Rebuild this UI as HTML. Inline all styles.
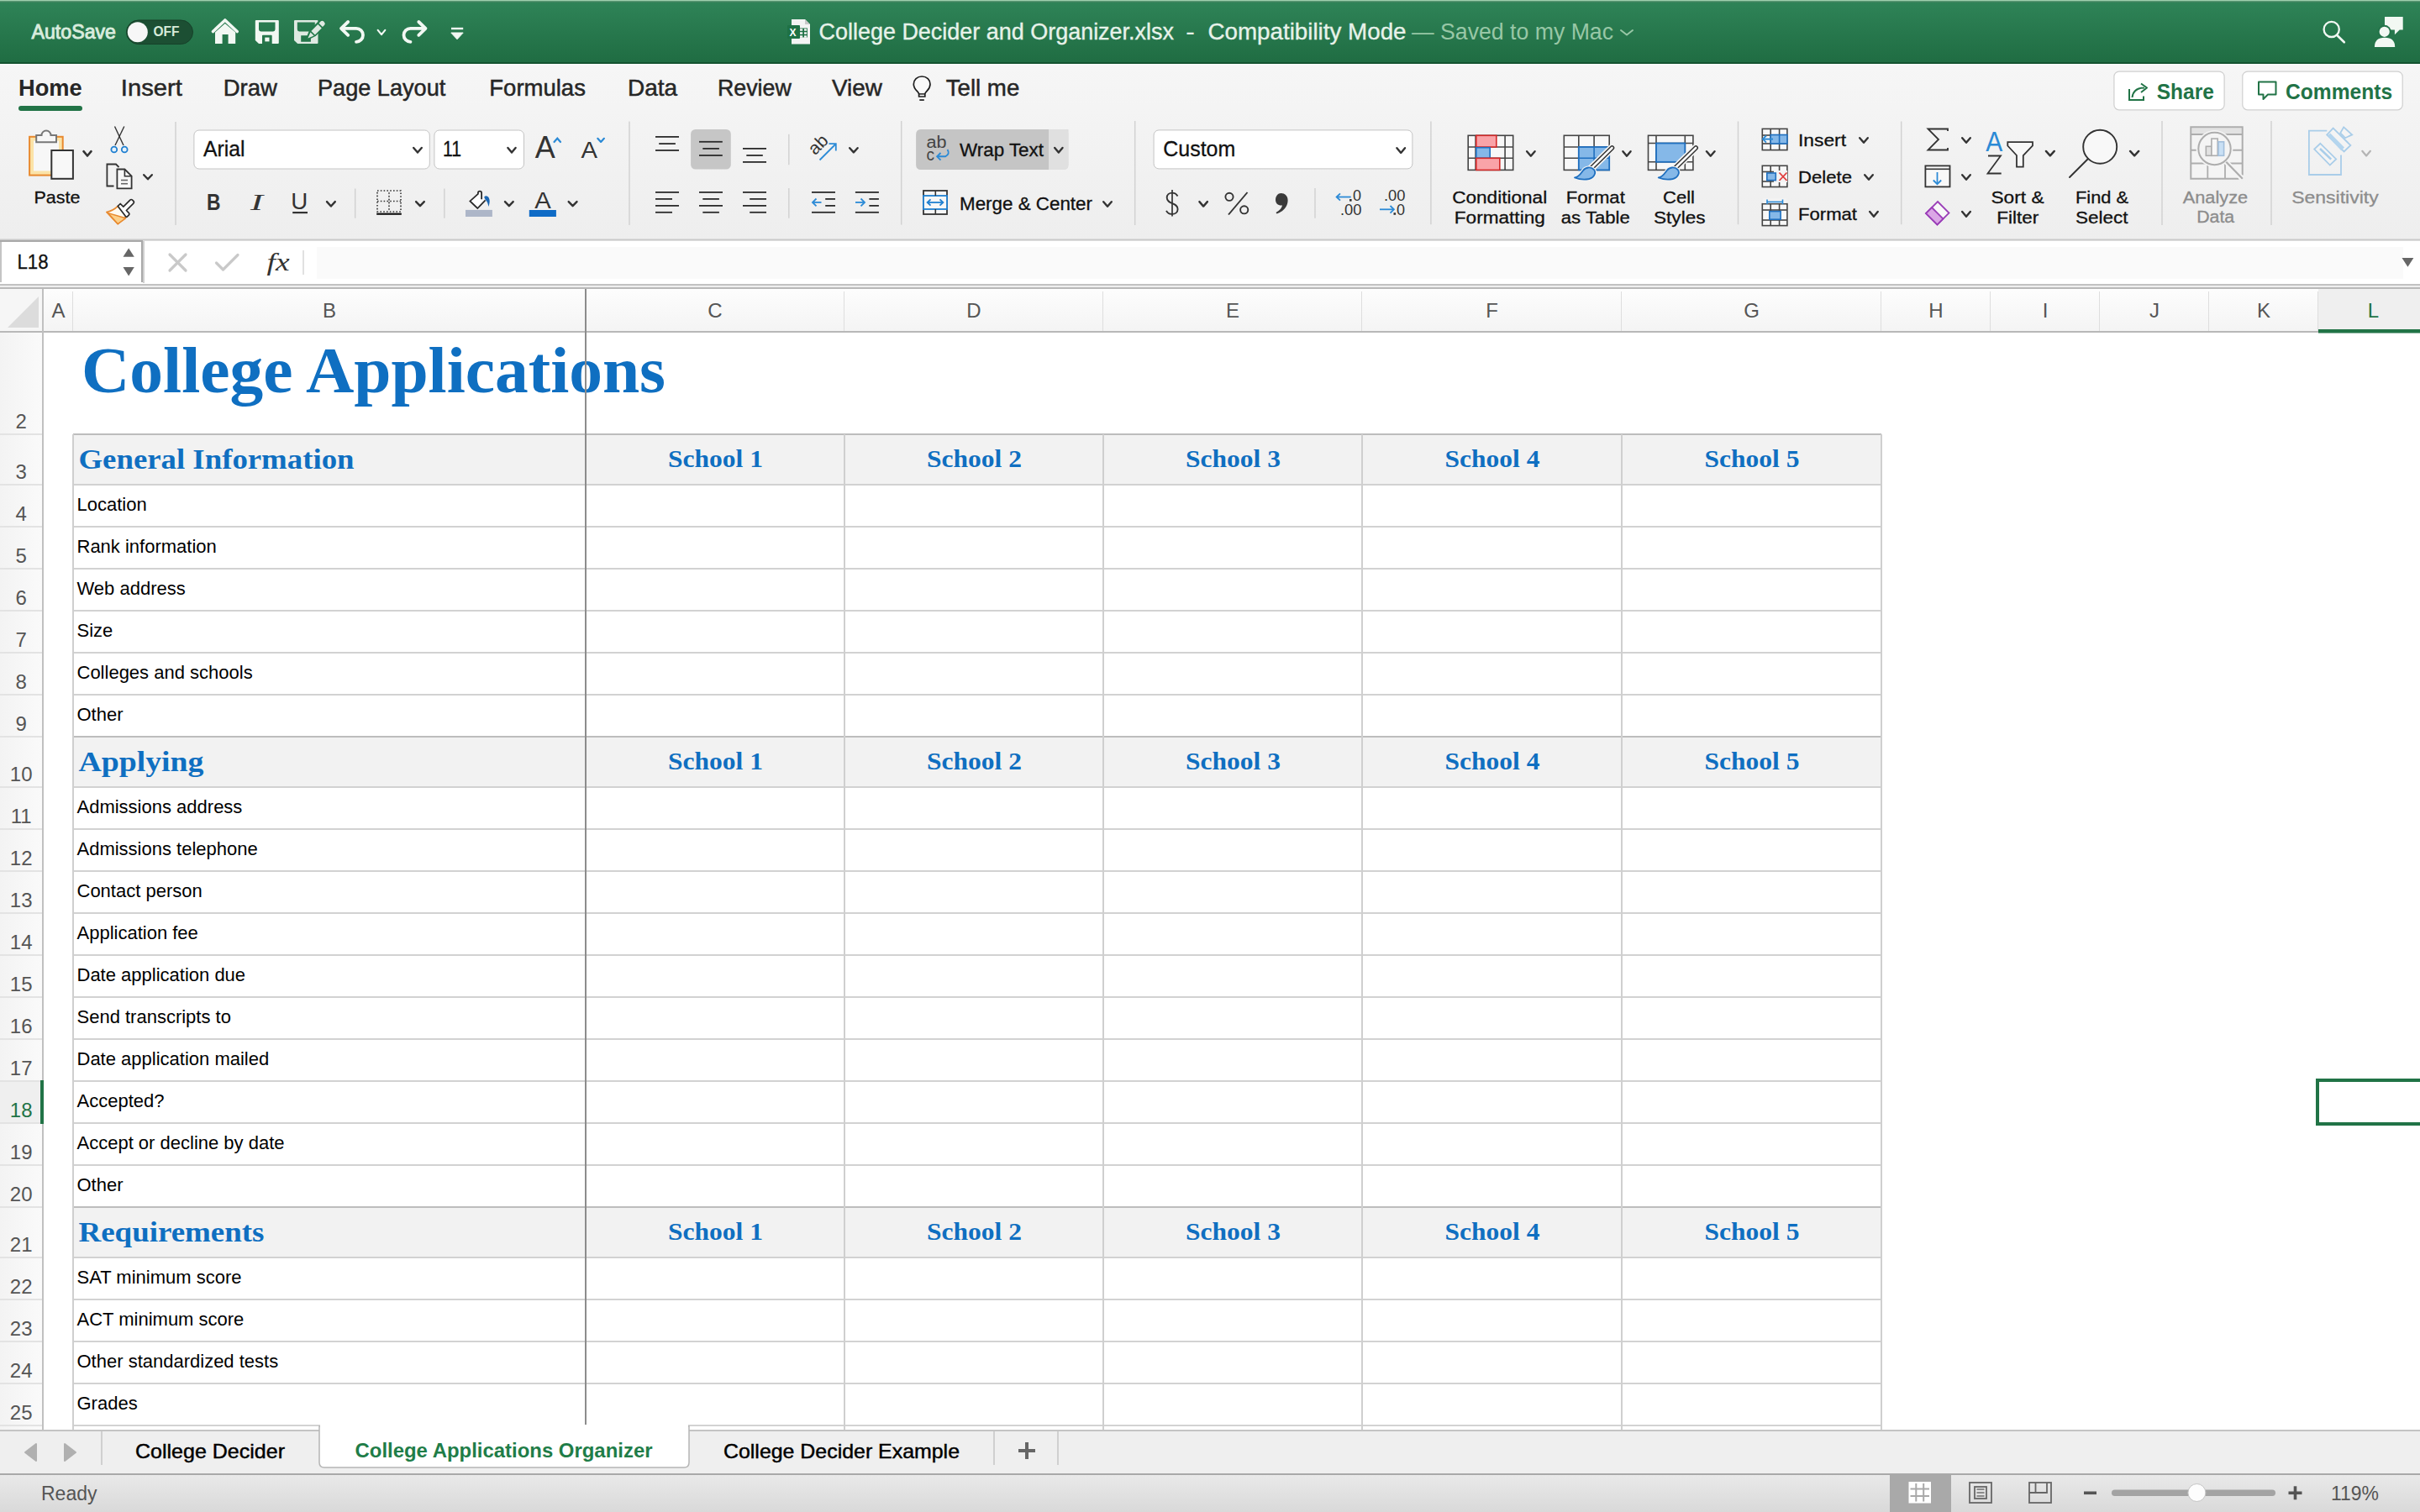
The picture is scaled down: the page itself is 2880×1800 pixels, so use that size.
<!DOCTYPE html>
<html><head><meta charset="utf-8"><title>Excel</title>
<style>html,body{margin:0;padding:0;width:2880px;height:1800px;overflow:hidden;background:#f3f3f3}svg{display:block}</style>
</head><body><svg width="2880" height="1800" viewBox="0 0 2880 1800">
<defs>
<linearGradient id="gTitle" x1="0" y1="0" x2="0" y2="1">
 <stop offset="0" stop-color="#2f8458"/><stop offset="1" stop-color="#1f6c42"/>
</linearGradient>
<linearGradient id="gRib" x1="0" y1="0" x2="0" y2="1">
 <stop offset="0" stop-color="#f6f6f6"/><stop offset="1" stop-color="#eeeeee"/>
</linearGradient>
<linearGradient id="gColHdr" x1="0" y1="0" x2="0" y2="1">
 <stop offset="0" stop-color="#fdfdfd"/><stop offset="1" stop-color="#f4f4f4"/>
</linearGradient>
<linearGradient id="gRowHdr" x1="0" y1="0" x2="1" y2="0">
 <stop offset="0" stop-color="#f3f3f3"/><stop offset="1" stop-color="#fafafa"/>
</linearGradient>
<linearGradient id="gStatus" x1="0" y1="0" x2="0" y2="1">
 <stop offset="0" stop-color="#e9e9e9"/><stop offset="1" stop-color="#d9d9d9"/>
</linearGradient>
<linearGradient id="gTabs" x1="0" y1="0" x2="0" y2="1">
 <stop offset="0" stop-color="#ececec"/><stop offset="1" stop-color="#f2f2f2"/>
</linearGradient>
</defs>
<rect x="0" y="0" width="2880" height="1800" fill="#f3f3f3" />
<rect x="0" y="0" width="2880" height="76" fill="url(#gTitle)" />
<rect x="0" y="0" width="2880" height="1.5" fill="#9fcfae" />
<rect x="0" y="1.5" width="2880" height="1" fill="#4f8566" />
<rect x="0" y="74" width="2880" height="2" fill="#145330" />
<rect x="0" y="76" width="2880" height="210" fill="url(#gRib)" />
<rect x="0" y="76" width="2880" height="1.5" fill="#fbfbfb" />
<rect x="0" y="284.5" width="2880" height="2" fill="#c9c9c9" />
<rect x="0" y="287" width="2880" height="52" fill="#ffffff" />
<rect x="377" y="294" width="2483" height="38" fill="#fafafa" />
<rect x="0" y="287" width="170" height="49" fill="#ffffff" />
<rect x="0" y="287" width="2" height="49" fill="#c4c4c4" />
<rect x="0" y="286" width="170" height="2" fill="#a9a9a9" />
<rect x="168" y="286" width="2" height="50" fill="#a9a9a9" />
<rect x="170" y="287" width="2" height="50" fill="#d0d0d0" />
<rect x="0" y="338" width="2880" height="2" fill="#c2c2c2" />
<rect x="0" y="340" width="2880" height="3" fill="#eeeeee" />
<rect x="0" y="342" width="2880" height="2" fill="#b9b9b9" />
<rect x="0" y="344" width="2880" height="1359" fill="#ffffff" />
<rect x="52" y="344" width="2828" height="50" fill="url(#gColHdr)" />
<rect x="0" y="344" width="50" height="50" fill="#f6f6f6" />
<polygon points="9,390 46,390 46,353" fill="#dcdcdc"/>
<rect x="0" y="394" width="2880" height="2" fill="#b8b8b8" />
<rect x="2759" y="344" width="121" height="50" fill="#efefef" />
<rect x="2759" y="392" width="121" height="4.5" fill="#217346" />
<text x="69.5" y="377.5" font-family="Liberation Sans" font-size="24" fill="#555555" text-anchor="middle" >A</text>
<rect x="86" y="347" width="1" height="47" fill="#dedede" />
<text x="392.0" y="377.5" font-family="Liberation Sans" font-size="24" fill="#555555" text-anchor="middle" >B</text>
<rect x="696" y="347" width="1" height="47" fill="#dedede" />
<text x="851.0" y="377.5" font-family="Liberation Sans" font-size="24" fill="#555555" text-anchor="middle" >C</text>
<rect x="1004" y="347" width="1" height="47" fill="#dedede" />
<text x="1159.0" y="377.5" font-family="Liberation Sans" font-size="24" fill="#555555" text-anchor="middle" >D</text>
<rect x="1312" y="347" width="1" height="47" fill="#dedede" />
<text x="1467.0" y="377.5" font-family="Liberation Sans" font-size="24" fill="#555555" text-anchor="middle" >E</text>
<rect x="1620" y="347" width="1" height="47" fill="#dedede" />
<text x="1775.5" y="377.5" font-family="Liberation Sans" font-size="24" fill="#555555" text-anchor="middle" >F</text>
<rect x="1929" y="347" width="1" height="47" fill="#dedede" />
<text x="2084.5" y="377.5" font-family="Liberation Sans" font-size="24" fill="#555555" text-anchor="middle" >G</text>
<rect x="2238" y="347" width="1" height="47" fill="#dedede" />
<text x="2304.0" y="377.5" font-family="Liberation Sans" font-size="24" fill="#555555" text-anchor="middle" >H</text>
<rect x="2368" y="347" width="1" height="47" fill="#dedede" />
<text x="2434.0" y="377.5" font-family="Liberation Sans" font-size="24" fill="#555555" text-anchor="middle" >I</text>
<rect x="2498" y="347" width="1" height="47" fill="#dedede" />
<text x="2564.0" y="377.5" font-family="Liberation Sans" font-size="24" fill="#555555" text-anchor="middle" >J</text>
<rect x="2628" y="347" width="1" height="47" fill="#dedede" />
<text x="2694.0" y="377.5" font-family="Liberation Sans" font-size="24" fill="#555555" text-anchor="middle" >K</text>
<rect x="2758" y="347" width="1" height="47" fill="#dedede" />
<text x="2824.5" y="377.5" font-family="Liberation Sans" font-size="24" fill="#217346" text-anchor="middle" >L</text>
<rect x="0" y="396" width="50" height="1307" fill="url(#gRowHdr)" />
<rect x="50" y="344" width="2" height="1359" fill="#c0c0c0" />
<rect x="0" y="516" width="50" height="2" fill="#e3e3e3" />
<text x="25.2" y="510" font-family="Liberation Sans" font-size="24" fill="#555555" text-anchor="middle" >2</text>
<rect x="0" y="576" width="50" height="2" fill="#e3e3e3" />
<text x="25.2" y="570" font-family="Liberation Sans" font-size="24" fill="#555555" text-anchor="middle" >3</text>
<rect x="0" y="626" width="50" height="2" fill="#e3e3e3" />
<text x="25.2" y="620" font-family="Liberation Sans" font-size="24" fill="#555555" text-anchor="middle" >4</text>
<rect x="0" y="676" width="50" height="2" fill="#e3e3e3" />
<text x="25.2" y="670" font-family="Liberation Sans" font-size="24" fill="#555555" text-anchor="middle" >5</text>
<rect x="0" y="726" width="50" height="2" fill="#e3e3e3" />
<text x="25.2" y="720" font-family="Liberation Sans" font-size="24" fill="#555555" text-anchor="middle" >6</text>
<rect x="0" y="776" width="50" height="2" fill="#e3e3e3" />
<text x="25.2" y="770" font-family="Liberation Sans" font-size="24" fill="#555555" text-anchor="middle" >7</text>
<rect x="0" y="826" width="50" height="2" fill="#e3e3e3" />
<text x="25.2" y="820" font-family="Liberation Sans" font-size="24" fill="#555555" text-anchor="middle" >8</text>
<rect x="0" y="876" width="50" height="2" fill="#e3e3e3" />
<text x="25.2" y="870" font-family="Liberation Sans" font-size="24" fill="#555555" text-anchor="middle" >9</text>
<rect x="0" y="936" width="50" height="2" fill="#e3e3e3" />
<text x="25.2" y="930" font-family="Liberation Sans" font-size="24" fill="#555555" text-anchor="middle" >10</text>
<rect x="0" y="986" width="50" height="2" fill="#e3e3e3" />
<text x="25.2" y="980" font-family="Liberation Sans" font-size="24" fill="#555555" text-anchor="middle" >11</text>
<rect x="0" y="1036" width="50" height="2" fill="#e3e3e3" />
<text x="25.2" y="1030" font-family="Liberation Sans" font-size="24" fill="#555555" text-anchor="middle" >12</text>
<rect x="0" y="1086" width="50" height="2" fill="#e3e3e3" />
<text x="25.2" y="1080" font-family="Liberation Sans" font-size="24" fill="#555555" text-anchor="middle" >13</text>
<rect x="0" y="1136" width="50" height="2" fill="#e3e3e3" />
<text x="25.2" y="1130" font-family="Liberation Sans" font-size="24" fill="#555555" text-anchor="middle" >14</text>
<rect x="0" y="1186" width="50" height="2" fill="#e3e3e3" />
<text x="25.2" y="1180" font-family="Liberation Sans" font-size="24" fill="#555555" text-anchor="middle" >15</text>
<rect x="0" y="1236" width="50" height="2" fill="#e3e3e3" />
<text x="25.2" y="1230" font-family="Liberation Sans" font-size="24" fill="#555555" text-anchor="middle" >16</text>
<rect x="0" y="1286" width="50" height="2" fill="#e3e3e3" />
<text x="25.2" y="1280" font-family="Liberation Sans" font-size="24" fill="#555555" text-anchor="middle" >17</text>
<rect x="0" y="1336" width="50" height="2" fill="#e3e3e3" />
<rect x="0" y="1288" width="48" height="48" fill="#efefef" />
<rect x="48" y="1286" width="4" height="52" fill="#217346" />
<text x="25.2" y="1330" font-family="Liberation Sans" font-size="24" fill="#217346" text-anchor="middle" >18</text>
<rect x="0" y="1386" width="50" height="2" fill="#e3e3e3" />
<text x="25.2" y="1380" font-family="Liberation Sans" font-size="24" fill="#555555" text-anchor="middle" >19</text>
<rect x="0" y="1436" width="50" height="2" fill="#e3e3e3" />
<text x="25.2" y="1430" font-family="Liberation Sans" font-size="24" fill="#555555" text-anchor="middle" >20</text>
<rect x="0" y="1496" width="50" height="2" fill="#e3e3e3" />
<text x="25.2" y="1490" font-family="Liberation Sans" font-size="24" fill="#555555" text-anchor="middle" >21</text>
<rect x="0" y="1546" width="50" height="2" fill="#e3e3e3" />
<text x="25.2" y="1540" font-family="Liberation Sans" font-size="24" fill="#555555" text-anchor="middle" >22</text>
<rect x="0" y="1596" width="50" height="2" fill="#e3e3e3" />
<text x="25.2" y="1590" font-family="Liberation Sans" font-size="24" fill="#555555" text-anchor="middle" >23</text>
<rect x="0" y="1646" width="50" height="2" fill="#e3e3e3" />
<text x="25.2" y="1640" font-family="Liberation Sans" font-size="24" fill="#555555" text-anchor="middle" >24</text>
<rect x="0" y="1696" width="50" height="2" fill="#e3e3e3" />
<text x="25.2" y="1690" font-family="Liberation Sans" font-size="24" fill="#555555" text-anchor="middle" >25</text>
<rect x="87" y="517" width="2152" height="60" fill="#f2f2f2" />
<rect x="87" y="877" width="2152" height="60" fill="#f2f2f2" />
<rect x="87" y="1437" width="2152" height="60" fill="#f2f2f2" />
<rect x="87" y="516" width="2152" height="2" fill="#bdbdbd" />
<rect x="87" y="576" width="2152" height="2" fill="#d2d2d2" />
<rect x="87" y="626" width="2152" height="2" fill="#d2d2d2" />
<rect x="87" y="676" width="2152" height="2" fill="#d2d2d2" />
<rect x="87" y="726" width="2152" height="2" fill="#d2d2d2" />
<rect x="87" y="776" width="2152" height="2" fill="#d2d2d2" />
<rect x="87" y="826" width="2152" height="2" fill="#d2d2d2" />
<rect x="87" y="876" width="2152" height="2" fill="#bdbdbd" />
<rect x="87" y="936" width="2152" height="2" fill="#d2d2d2" />
<rect x="87" y="986" width="2152" height="2" fill="#d2d2d2" />
<rect x="87" y="1036" width="2152" height="2" fill="#d2d2d2" />
<rect x="87" y="1086" width="2152" height="2" fill="#d2d2d2" />
<rect x="87" y="1136" width="2152" height="2" fill="#d2d2d2" />
<rect x="87" y="1186" width="2152" height="2" fill="#d2d2d2" />
<rect x="87" y="1236" width="2152" height="2" fill="#d2d2d2" />
<rect x="87" y="1286" width="2152" height="2" fill="#d2d2d2" />
<rect x="87" y="1336" width="2152" height="2" fill="#d2d2d2" />
<rect x="87" y="1386" width="2152" height="2" fill="#d2d2d2" />
<rect x="87" y="1436" width="2152" height="2" fill="#bdbdbd" />
<rect x="87" y="1496" width="2152" height="2" fill="#d2d2d2" />
<rect x="87" y="1546" width="2152" height="2" fill="#d2d2d2" />
<rect x="87" y="1596" width="2152" height="2" fill="#d2d2d2" />
<rect x="87" y="1646" width="2152" height="2" fill="#d2d2d2" />
<rect x="87" y="1696" width="2152" height="2" fill="#d2d2d2" />
<rect x="86" y="517" width="2" height="1186" fill="#cfcfcf" />
<rect x="696" y="517" width="2" height="1186" fill="#cfcfcf" />
<rect x="1004" y="517" width="2" height="1186" fill="#cfcfcf" />
<rect x="1312" y="517" width="2" height="1186" fill="#cfcfcf" />
<rect x="1620" y="517" width="2" height="1186" fill="#cfcfcf" />
<rect x="1929" y="517" width="2" height="1186" fill="#cfcfcf" />
<rect x="2238" y="517" width="2" height="1186" fill="#cfcfcf" />
<text x="93.5" y="558" font-family="Liberation Serif" font-size="34" fill="#0f6fc1" font-weight="bold" textLength="328" lengthAdjust="spacingAndGlyphs" >General Information</text>
<text x="851.5" y="556" font-family="Liberation Serif" font-size="29.5" fill="#0f6fc1" font-weight="bold" text-anchor="middle" textLength="113" lengthAdjust="spacingAndGlyphs" >School 1</text>
<text x="1159.5" y="556" font-family="Liberation Serif" font-size="29.5" fill="#0f6fc1" font-weight="bold" text-anchor="middle" textLength="113" lengthAdjust="spacingAndGlyphs" >School 2</text>
<text x="1467.5" y="556" font-family="Liberation Serif" font-size="29.5" fill="#0f6fc1" font-weight="bold" text-anchor="middle" textLength="113" lengthAdjust="spacingAndGlyphs" >School 3</text>
<text x="1776.0" y="556" font-family="Liberation Serif" font-size="29.5" fill="#0f6fc1" font-weight="bold" text-anchor="middle" textLength="113" lengthAdjust="spacingAndGlyphs" >School 4</text>
<text x="2085.0" y="556" font-family="Liberation Serif" font-size="29.5" fill="#0f6fc1" font-weight="bold" text-anchor="middle" textLength="113" lengthAdjust="spacingAndGlyphs" >School 5</text>
<text x="91.5" y="608" font-family="Liberation Sans" font-size="22" fill="#000000" >Location</text>
<text x="91.5" y="658" font-family="Liberation Sans" font-size="22" fill="#000000" >Rank information</text>
<text x="91.5" y="708" font-family="Liberation Sans" font-size="22" fill="#000000" >Web address</text>
<text x="91.5" y="758" font-family="Liberation Sans" font-size="22" fill="#000000" >Size</text>
<text x="91.5" y="808" font-family="Liberation Sans" font-size="22" fill="#000000" >Colleges and schools</text>
<text x="91.5" y="858" font-family="Liberation Sans" font-size="22" fill="#000000" >Other</text>
<text x="93.5" y="918" font-family="Liberation Serif" font-size="34" fill="#0f6fc1" font-weight="bold" textLength="149" lengthAdjust="spacingAndGlyphs" >Applying</text>
<text x="851.5" y="916" font-family="Liberation Serif" font-size="29.5" fill="#0f6fc1" font-weight="bold" text-anchor="middle" textLength="113" lengthAdjust="spacingAndGlyphs" >School 1</text>
<text x="1159.5" y="916" font-family="Liberation Serif" font-size="29.5" fill="#0f6fc1" font-weight="bold" text-anchor="middle" textLength="113" lengthAdjust="spacingAndGlyphs" >School 2</text>
<text x="1467.5" y="916" font-family="Liberation Serif" font-size="29.5" fill="#0f6fc1" font-weight="bold" text-anchor="middle" textLength="113" lengthAdjust="spacingAndGlyphs" >School 3</text>
<text x="1776.0" y="916" font-family="Liberation Serif" font-size="29.5" fill="#0f6fc1" font-weight="bold" text-anchor="middle" textLength="113" lengthAdjust="spacingAndGlyphs" >School 4</text>
<text x="2085.0" y="916" font-family="Liberation Serif" font-size="29.5" fill="#0f6fc1" font-weight="bold" text-anchor="middle" textLength="113" lengthAdjust="spacingAndGlyphs" >School 5</text>
<text x="91.5" y="968" font-family="Liberation Sans" font-size="22" fill="#000000" >Admissions address</text>
<text x="91.5" y="1018" font-family="Liberation Sans" font-size="22" fill="#000000" >Admissions telephone</text>
<text x="91.5" y="1068" font-family="Liberation Sans" font-size="22" fill="#000000" >Contact person</text>
<text x="91.5" y="1118" font-family="Liberation Sans" font-size="22" fill="#000000" >Application fee</text>
<text x="91.5" y="1168" font-family="Liberation Sans" font-size="22" fill="#000000" >Date application due</text>
<text x="91.5" y="1218" font-family="Liberation Sans" font-size="22" fill="#000000" >Send transcripts to</text>
<text x="91.5" y="1268" font-family="Liberation Sans" font-size="22" fill="#000000" >Date application mailed</text>
<text x="91.5" y="1318" font-family="Liberation Sans" font-size="22" fill="#000000" >Accepted?</text>
<text x="91.5" y="1368" font-family="Liberation Sans" font-size="22" fill="#000000" >Accept or decline by date</text>
<text x="91.5" y="1418" font-family="Liberation Sans" font-size="22" fill="#000000" >Other</text>
<text x="93.5" y="1478" font-family="Liberation Serif" font-size="34" fill="#0f6fc1" font-weight="bold" textLength="221" lengthAdjust="spacingAndGlyphs" >Requirements</text>
<text x="851.5" y="1476" font-family="Liberation Serif" font-size="29.5" fill="#0f6fc1" font-weight="bold" text-anchor="middle" textLength="113" lengthAdjust="spacingAndGlyphs" >School 1</text>
<text x="1159.5" y="1476" font-family="Liberation Serif" font-size="29.5" fill="#0f6fc1" font-weight="bold" text-anchor="middle" textLength="113" lengthAdjust="spacingAndGlyphs" >School 2</text>
<text x="1467.5" y="1476" font-family="Liberation Serif" font-size="29.5" fill="#0f6fc1" font-weight="bold" text-anchor="middle" textLength="113" lengthAdjust="spacingAndGlyphs" >School 3</text>
<text x="1776.0" y="1476" font-family="Liberation Serif" font-size="29.5" fill="#0f6fc1" font-weight="bold" text-anchor="middle" textLength="113" lengthAdjust="spacingAndGlyphs" >School 4</text>
<text x="2085.0" y="1476" font-family="Liberation Serif" font-size="29.5" fill="#0f6fc1" font-weight="bold" text-anchor="middle" textLength="113" lengthAdjust="spacingAndGlyphs" >School 5</text>
<text x="91.5" y="1528" font-family="Liberation Sans" font-size="22" fill="#000000" >SAT minimum score</text>
<text x="91.5" y="1578" font-family="Liberation Sans" font-size="22" fill="#000000" >ACT minimum score</text>
<text x="91.5" y="1628" font-family="Liberation Sans" font-size="22" fill="#000000" >Other standardized tests</text>
<text x="91.5" y="1678" font-family="Liberation Sans" font-size="22" fill="#000000" >Grades</text>
<text x="97" y="466.5" font-family="Liberation Serif" font-size="78" fill="#0f6fc1" font-weight="bold" textLength="695" lengthAdjust="spacingAndGlyphs" >College Applications</text>
<rect x="696" y="344" width="2" height="1359" fill="#8c8c8c" />
<rect x="2758" y="1286" width="130" height="52" fill="none" stroke="#217346" stroke-width="4"/>
<rect x="0" y="1703" width="2880" height="52" fill="#efefef" />
<rect x="0" y="1702" width="2880" height="2" fill="#c4c4c4" />
<rect x="0" y="1754" width="2880" height="2" fill="#a9a9a9" />
<polygon points="30,1729 43,1719 43,1739" fill="#b0b0b0" stroke="#b0b0b0" stroke-width="2" stroke-linejoin="round"/>
<polygon points="90,1729 77,1719 77,1739" fill="#b0b0b0" stroke="#b0b0b0" stroke-width="2" stroke-linejoin="round"/>
<rect x="120" y="1704" width="2" height="40" fill="#d0d0d0" />
<path d="M380,1698 L820,1698 L820,1741 Q820,1747 814,1747 L386,1747 Q380,1747 380,1741 Z" fill="#ffffff" stroke="#b5b5b5" stroke-width="1.5"/>
<rect x="381" y="1696" width="438" height="6" fill="#ffffff" />
<text x="161" y="1735.5" font-family="Liberation Sans" font-size="24" fill="#000" textLength="178" lengthAdjust="spacingAndGlyphs" stroke="#000" stroke-width="0.45">College Decider</text>
<text x="422.5" y="1735.2" font-family="Liberation Sans" font-size="24" fill="#1f7d48" font-weight="bold" textLength="354" lengthAdjust="spacingAndGlyphs" >College Applications Organizer</text>
<text x="861" y="1735.5" font-family="Liberation Sans" font-size="24" fill="#000" textLength="281" lengthAdjust="spacingAndGlyphs" stroke="#000" stroke-width="0.45">College Decider Example</text>
<rect x="1182" y="1704" width="2" height="40" fill="#d0d0d0" />
<rect x="1258" y="1704" width="2" height="40" fill="#d0d0d0" />
<rect x="1212" y="1725" width="20" height="4" fill="#666" />
<rect x="1220" y="1717" width="4" height="20" fill="#666" />
<rect x="0" y="1756" width="2880" height="44" fill="url(#gStatus)" />
<text x="49" y="1786" font-family="Liberation Sans" font-size="23" fill="#555555" >Ready</text>
<rect x="2249" y="1756" width="73" height="44" fill="#a9a9a9" />
<text x="37.5" y="46.4" font-family="Liberation Sans" font-size="23" fill="#d9ecdd" textLength="100.5" lengthAdjust="spacingAndGlyphs" stroke="#d9ecdd" stroke-width="0.9">AutoSave</text>
<rect x="150.5" y="24" width="79" height="28.5" rx="14.25" fill="#1c4f33" stroke="#164029" stroke-width="1"/>
<circle cx="163.8" cy="38.2" r="12" fill="#f7f7f7"/>
<text x="182.5" y="42.8" font-family="Liberation Sans" font-size="16" fill="#d6ebd9" font-weight="bold" textLength="31" lengthAdjust="spacingAndGlyphs" >OFF</text>
<polyline points="253.5,37.5 267.8,24 282.2,37.5" fill="none" stroke="#f2f8f3" stroke-width="3.6" stroke-linecap="round" stroke-linejoin="round"/>
<path d="M256,38.5 L267.8,28 L280.2,38.5 L280.2,52 L271.6,52 L271.6,41 L264.6,41 L264.6,52 L256,52 Z" fill="#f2f8f3"/>
<path d="M303.8,25 Q303.8,24 304.8,24 L330.8,24 Q331.8,24 331.8,25 L331.8,51 Q331.8,52 330.8,52 L308,52 L303.8,48 Z M308,26.5 L308,35 Q308,37.4 310.4,37.4 L325.1,37.4 Q327.5,37.4 327.5,35 L327.5,26.5 Z M312,52 L312,42.5 Q312,41.7 312.8,41.7 L322.9,41.7 Q323.7,41.7 323.7,42.5 L323.7,52 Z" fill="#f2f8f3" fill-rule="evenodd"/>
<rect x="315.3" y="44.6" width="5.2" height="4.8" fill="#f2f8f3" />
<path d="M350,25 Q350,24 351,24 L377.5,24 Q378.5,24 378.5,25 L378.5,51 Q378.5,52 377.5,52 L354.2,52 L350,48 Z M353.8,26.5 L353.8,35 Q353.8,37.4 356.2,37.4 L372.4,37.4 Q374.8,37.4 374.8,35 L374.8,26.5 Z M358.2,49.8 L358.2,42.3 L369.9,42.3 L369.9,49.8 Z" fill="#dfe9e2" fill-rule="evenodd"/>
<polygon points="365.8,46.2 369.4,37 378.6,27.8 382.4,24.4 386.8,28.6 383.6,32.6 374.8,41.6" fill="#247a4b" stroke="#247a4b" stroke-width="3.2" stroke-linejoin="round"/>
<polygon points="370.4,36.9 378.3,29 382.8,33.5 374.9,41.4" fill="#dfe9e2"/>
<path d="M379.5,27.7 L381.6,25.6 Q383.4,23.8 385.2,25.6 L386,26.4 Q387.8,28.2 386,30 L383.9,32.1 Z" fill="#dfe9e2"/>
<polygon points="366.4,45.6 369.5,38.4 373.6,42.5" fill="#dfe9e2"/>
<path d="M414.2,26 L406,33.8 L414.2,41.8 M406.5,33.8 L424,33.8 A8,8 0 0 1 424,49.8" fill="none" stroke="#f2f8f3" stroke-width="3.8" stroke-linecap="round" stroke-linejoin="round"/>
<polyline points="449.70000000000005,35.9 454.0,41.1 458.29999999999995,35.9" fill="none" stroke="#f2f8f3" stroke-width="2.2" stroke-linecap="round" stroke-linejoin="round"/>
<path d="M498.3,26 L506.5,33.8 L498.3,41.8 M506,33.8 L488.5,33.8 A8,8 0 0 0 488.5,49.8" fill="none" stroke="#f2f8f3" stroke-width="3.8" stroke-linecap="round" stroke-linejoin="round"/>
<rect x="537" y="32.8" width="14.2" height="2.4" fill="#f2f8f3" />
<polygon points="536.8,39 551.2,39 544,46.8" fill="#f2f8f3" stroke="#f2f8f3" stroke-width="1" stroke-linejoin="round"/>
<path d="M942,23 L958,23 L964,29 L964,52.5 L942,52.5 Z" fill="#f4f4f4"/>
<path d="M958,23 L958,29 L964,29 Z" fill="#c9c9c9"/>
<rect x="951" y="33.5" width="10" height="11" fill="#1e7145"/>
<rect x="952.0" y="34.3" width="3.2" height="2.4" fill="#f4f4f4"/>
<rect x="952.0" y="38.3" width="3.2" height="2.4" fill="#f4f4f4"/>
<rect x="952.0" y="42.3" width="3.2" height="2.4" fill="#f4f4f4"/>
<rect x="957.0" y="34.3" width="3.2" height="2.4" fill="#f4f4f4"/>
<rect x="957.0" y="38.3" width="3.2" height="2.4" fill="#f4f4f4"/>
<rect x="957.0" y="42.3" width="3.2" height="2.4" fill="#f4f4f4"/>
<rect x="937" y="30" width="15" height="16" rx="1" fill="#1e7145"/>
<text x="939.6" y="43" font-family="Liberation Sans" font-size="12" fill="#ffffff" font-weight="bold" >X</text>
<text x="974.5" y="47" font-family="Liberation Sans" font-size="27" fill="#e7f2e9" textLength="422.5" lengthAdjust="spacingAndGlyphs" stroke="#e7f2e9" stroke-width="0.35">College Decider and Organizer.xlsx</text>
<text x="1411" y="47" font-family="Liberation Sans" font-size="27" fill="#e7f2e9" textLength="11" lengthAdjust="spacingAndGlyphs" >-</text>
<text x="1437.5" y="47" font-family="Liberation Sans" font-size="27" fill="#e7f2e9" textLength="236" lengthAdjust="spacingAndGlyphs" stroke="#e7f2e9" stroke-width="0.35">Compatibility Mode</text>
<text x="1680" y="47" font-family="Liberation Sans" font-size="27" fill="#98c7a6" textLength="240" lengthAdjust="spacingAndGlyphs" >— Saved to my Mac</text>
<polyline points="1929.0,36.0 1936.0,41.5 1943.0,36.0" fill="none" stroke="#98c7a6" stroke-width="2" stroke-linecap="round" stroke-linejoin="round"/>
<circle cx="2774.7" cy="34.9" r="9.1" fill="none" stroke="#f2f8f3" stroke-width="2.3"/>
<line x1="2781.3" y1="42" x2="2789.8" y2="50.3" stroke="#f2f8f3" stroke-width="2.6" stroke-linecap="round"/>
<path d="M2838,20.1 L2859.7,20.1 L2859.7,35.4 L2855.7,35.4 L2849.9,41.2 L2849.9,35.4 L2838,35.4 Z" fill="#f2f8f3"/>
<circle cx="2837.7" cy="37.8" r="8" fill="#237349"/>
<circle cx="2837.7" cy="37.8" r="6.1" fill="#f2f8f3"/>
<path d="M2825.9,56 Q2825.9,44.7 2838,44.7 Q2850.2,44.7 2850.2,56 Z" fill="#f2f8f3"/>
<text x="22" y="113.8" font-family="Liberation Sans" font-size="28" fill="#262626" font-weight="bold" textLength="75.7" lengthAdjust="spacingAndGlyphs" >Home</text>
<text x="143.8" y="113.8" font-family="Liberation Sans" font-size="28" fill="#262626" textLength="73.0" lengthAdjust="spacingAndGlyphs" stroke="#262626" stroke-width="0.5">Insert</text>
<text x="265.7" y="113.8" font-family="Liberation Sans" font-size="28" fill="#262626" textLength="64.2" lengthAdjust="spacingAndGlyphs" stroke="#262626" stroke-width="0.5">Draw</text>
<text x="378" y="113.8" font-family="Liberation Sans" font-size="28" fill="#262626" textLength="152.3" lengthAdjust="spacingAndGlyphs" stroke="#262626" stroke-width="0.5">Page Layout</text>
<text x="582.3" y="113.8" font-family="Liberation Sans" font-size="28" fill="#262626" textLength="114.6" lengthAdjust="spacingAndGlyphs" stroke="#262626" stroke-width="0.5">Formulas</text>
<text x="747" y="113.8" font-family="Liberation Sans" font-size="28" fill="#262626" textLength="59.1" lengthAdjust="spacingAndGlyphs" stroke="#262626" stroke-width="0.5">Data</text>
<text x="854" y="113.8" font-family="Liberation Sans" font-size="28" fill="#262626" textLength="87.8" lengthAdjust="spacingAndGlyphs" stroke="#262626" stroke-width="0.5">Review</text>
<text x="990" y="113.8" font-family="Liberation Sans" font-size="28" fill="#262626" textLength="59.8" lengthAdjust="spacingAndGlyphs" stroke="#262626" stroke-width="0.5">View</text>
<text x="1125.7" y="113.8" font-family="Liberation Sans" font-size="28" fill="#262626" textLength="87.6" lengthAdjust="spacingAndGlyphs" stroke="#262626" stroke-width="0.5">Tell me</text>
<rect x="22" y="126" width="76" height="6" rx="3" fill="#217346"/>
<path d="M1097.2,91 C1091.5,91 1087.3,95.2 1087.3,100.2 C1087.3,104 1089.3,106.3 1091.3,108.4 C1092.4,109.6 1093.4,110.6 1093.6,111.8 L1093.6,115 L1100.8,115 L1100.8,111.8 C1101,110.6 1102,109.6 1103.1,108.4 C1105.1,106.3 1107,104 1107,100.2 C1107,95.2 1102.9,91 1097.2,91 Z" fill="#f9f9f9" stroke="#1e1e1e" stroke-width="1.7"/>
<line x1="1093.6" y1="111.9" x2="1100.8" y2="111.9" stroke="#1e1e1e" stroke-width="1.5" stroke-linecap="butt"/>
<rect x="1094.3" y="118.2" width="5.5" height="1.7" fill="#1e1e1e" />
<rect x="2515.9" y="85.1" width="131.2" height="45.7" rx="6" fill="#ffffff" stroke="#cfcfcf" stroke-width="1.2"/>
<rect x="2668.8" y="85.1" width="190.4" height="45.7" rx="6" fill="#ffffff" stroke="#cfcfcf" stroke-width="1.2"/>
<path d="M2534,106 L2534,119 L2551,119 L2551,114.5" fill="none" stroke="#217346" stroke-width="2"/>
<path d="M2537.5,116 C2538.5,108 2543,104.5 2552,104.5 M2548,99.5 L2555,104.5 L2548,110" fill="none" stroke="#217346" stroke-width="2" stroke-linejoin="round"/>
<text x="2566.8" y="118.1" font-family="Liberation Sans" font-size="25" fill="#217346" font-weight="bold" textLength="68" lengthAdjust="spacingAndGlyphs" >Share</text>
<path d="M2688,97.5 L2708.5,97.5 L2708.5,112.5 L2699,112.5 L2693.5,118 L2693.5,112.5 L2688,112.5 Z" fill="none" stroke="#217346" stroke-width="2" stroke-linejoin="round"/>
<text x="2720.1" y="118.1" font-family="Liberation Sans" font-size="25" fill="#217346" font-weight="bold" textLength="127" lengthAdjust="spacingAndGlyphs" >Comments</text>
<rect x="35.1" y="162.8" width="39.6" height="45.8" fill="#fbe3a8" stroke="#e8892e" stroke-width="2"/>
<rect x="40" y="167.5" width="30" height="36" fill="#f7f7f7"/>
<path d="M43.2,169.2 L43.2,161 L49.5,161 A5.5,5.5 0 0 1 60.5,161 L67,161 L67,169.2 Z" fill="#f7f7f7" stroke="#777" stroke-width="2"/>
<rect x="61.3" y="179" width="25.6" height="33.8" fill="#f8f8f8" stroke="#333" stroke-width="2"/>
<polyline points="99.5,180.20000000000002 104.0,185.5 108.5,180.20000000000002" fill="none" stroke="#333333" stroke-width="2.6" stroke-linecap="round" stroke-linejoin="round"/>
<text x="40.5" y="241.8" font-family="Liberation Sans" font-size="21" fill="#111" textLength="55" lengthAdjust="spacingAndGlyphs" stroke="#111" stroke-width="0.3">Paste</text>
<line x1="136.5" y1="150.5" x2="147" y2="173" stroke="#333333" stroke-width="1.4" stroke-linecap="butt"/>
<line x1="147.8" y1="150.5" x2="137" y2="173" stroke="#333333" stroke-width="1.4" stroke-linecap="butt"/>
<circle cx="135.8" cy="178" r="3.4" fill="#e6f1fa" stroke="#1f7fd0" stroke-width="1.8"/>
<circle cx="148.2" cy="178" r="3.4" fill="#e6f1fa" stroke="#1f7fd0" stroke-width="1.8"/>
<path d="M135.5,221.5 L127.4,221.5 L127.4,195.5 L138,195.5 L141.5,199" fill="none" stroke="#333" stroke-width="1.8"/>
<path d="M139.4,201.5 L148.4,201.5 L156.6,209.7 L156.6,224.3 L139.4,224.3 Z" fill="#f8f8f8" stroke="#333" stroke-width="1.8" stroke-linejoin="miter"/>
<path d="M148.4,201.5 L148.4,209.7 L156.6,209.7" fill="none" stroke="#333" stroke-width="1.6"/>
<line x1="144" y1="214.5" x2="152" y2="214.5" stroke="#666" stroke-width="1.6" stroke-linecap="butt"/>
<line x1="144" y1="218.7" x2="152" y2="218.7" stroke="#666" stroke-width="1.6" stroke-linecap="butt"/>
<polyline points="171.2,208.2 176.0,213.3 180.8,208.2" fill="none" stroke="#333333" stroke-width="2.4" stroke-linecap="round" stroke-linejoin="round"/>
<path d="M140.2,245.4 C136.5,249.3 131.5,251.5 126.8,252.5 L140.2,266.6 L150.8,257.2 Z" fill="#fffaf0" stroke="#e8892e" stroke-width="1.6" stroke-linejoin="round"/>
<path d="M128.5,253.6 L149.5,259.8 L140.2,266.6 Z" fill="#fcd089" stroke="#e8892e" stroke-width="1.5" stroke-linejoin="round"/>
<path d="M140.3,245.4 L143.2,242.5 L146.8,246.1 L154.6,238.3 Q156.2,236.7 157.8,238.3 L158.6,239.1 Q160.2,240.7 158.6,242.3 L150.4,250.5 L153.2,253.3 Q154.6,254.7 153.2,256.1 L151.4,257.9 Q150.6,258.7 149.8,257.9 Z" fill="#ffffff" stroke="#2a2a2a" stroke-width="1.7" stroke-linejoin="round"/>
<rect x="208.25" y="145" width="1.5" height="123" fill="#d2d2d2" />
<rect x="230.9" y="155" width="280.4" height="46" rx="6" fill="#ffffff" stroke="#c4c4c4" stroke-width="1"/>
<text x="242" y="186" font-family="Liberation Sans" font-size="25.5" fill="#111" textLength="49.5" lengthAdjust="spacingAndGlyphs" stroke="#111" stroke-width="0.3">Arial</text>
<polyline points="492.2,175.89999999999998 497.0,181.60000000000002 501.8,175.89999999999998" fill="none" stroke="#333333" stroke-width="2.4" stroke-linecap="round" stroke-linejoin="round"/>
<rect x="516.9" y="155" width="106.6" height="46" rx="6" fill="#ffffff" stroke="#c4c4c4" stroke-width="1"/>
<text x="527" y="186" font-family="Liberation Sans" font-size="25.5" fill="#111" textLength="22" lengthAdjust="spacingAndGlyphs" stroke="#111" stroke-width="0.3">11</text>
<polyline points="604.4000000000001,175.89999999999998 609.0,181.60000000000002 613.5999999999999,175.89999999999998" fill="none" stroke="#333333" stroke-width="2.4" stroke-linecap="round" stroke-linejoin="round"/>
<text x="636.8" y="187.7" font-family="Liberation Sans" font-size="36" fill="#333" textLength="24" lengthAdjust="spacingAndGlyphs" >A</text>
<polyline points="659.5,169 663.3,164.7 667,169" fill="none" stroke="#2b8ad6" stroke-width="2.2" stroke-linecap="round"/>
<text x="691.6" y="187.7" font-family="Liberation Sans" font-size="28.5" fill="#333" textLength="19.5" lengthAdjust="spacingAndGlyphs" >A</text>
<polyline points="711.3000000000001,164.79999999999998 715.1,168.9 718.9,164.79999999999998" fill="none" stroke="#2b8ad6" stroke-width="2.2" stroke-linecap="round" stroke-linejoin="round"/>
<text x="246" y="249.7" font-family="Liberation Sans" font-size="28" fill="#333" font-weight="bold" textLength="16.5" lengthAdjust="spacingAndGlyphs" >B</text>
<text x="298" y="249.7" font-family="Liberation Serif" font-size="28" fill="#333" font-style="italic" textLength="15" lengthAdjust="spacingAndGlyphs" >I</text>
<text x="346.3" y="248.8" font-family="Liberation Sans" font-size="27" fill="#333" textLength="20" lengthAdjust="spacingAndGlyphs" >U</text>
<rect x="348.2" y="252" width="17.8" height="2.2" fill="#333" />
<polyline points="389.0,240.1 393.9,245.5 398.8,240.1" fill="none" stroke="#333333" stroke-width="2.4" stroke-linecap="round" stroke-linejoin="round"/>
<rect x="421.95" y="224.5" width="1.5" height="35.19999999999999" fill="#d2d2d2" />
<rect x="449" y="227" width="28" height="25" fill="none" stroke="#333" stroke-width="1.6" stroke-dasharray="1.6,2.2"/>
<line x1="463" y1="227" x2="463" y2="252" stroke="#333" stroke-width="1.6" stroke-linecap="butt"/>
<line x1="449" y1="239.5" x2="477" y2="239.5" stroke="#333" stroke-width="1.6" stroke-dasharray="1.6,2.2"/>
<line x1="463" y1="227" x2="463" y2="252" stroke="#f3f3f3" stroke-width="1.8" stroke-dasharray="2.2,1.6"/>
<rect x="448.2" y="253.6" width="29.6" height="2.2" fill="#111" />
<polyline points="495.09999999999997,240.1 499.95,245.20000000000002 504.8,240.1" fill="none" stroke="#333333" stroke-width="2.4" stroke-linecap="round" stroke-linejoin="round"/>
<rect x="528.05" y="224.5" width="1.5" height="35.19999999999999" fill="#d2d2d2" />
<path d="M573.1,237.2 L573.1,229.8 A2.1,2.1 0 0 0 568.9,229.8 L568.9,230.8 L559.4,239.4 L568.3,248 L577.6,238.3" fill="#ffffff" stroke="#2a2a2a" stroke-width="1.8" stroke-linejoin="miter"/>
<path d="M576.2,234.8 C577,233 579,232.8 580.5,234 C583,236 583.5,240.5 581.4,246 C580.8,242.5 579.8,239.5 577.8,238 Z" fill="#1a66b3"/>
<rect x="554" y="249.9" width="31.9" height="8.1" fill="#adb6c8" />
<polyline points="601.0,240.1 605.8499999999999,245.20000000000002 610.6999999999999,240.1" fill="none" stroke="#333333" stroke-width="2.4" stroke-linecap="round" stroke-linejoin="round"/>
<text x="636.2" y="247.6" font-family="Liberation Sans" font-size="28" fill="#333" textLength="19.5" lengthAdjust="spacingAndGlyphs" >A</text>
<rect x="629.8" y="250" width="32.1" height="8" fill="#0f6bc6" />
<polyline points="676.7,240.1 681.6,245.20000000000002 686.5,240.1" fill="none" stroke="#333333" stroke-width="2.4" stroke-linecap="round" stroke-linejoin="round"/>
<rect x="748.25" y="144.6" width="1.5" height="123.29999999999998" fill="#d2d2d2" />
<rect x="780" y="162.0" width="28" height="1.8" fill="#2b2b2b" />
<rect x="784.2" y="170.2" width="19.699999999999932" height="1.8" fill="#2b2b2b" />
<rect x="780" y="178.1" width="28" height="1.8" fill="#2b2b2b" />
<rect x="822.1" y="153.9" width="47.7" height="47.6" rx="5.5" fill="#c6c6c6"/>
<rect x="832" y="167.9" width="27.799999999999955" height="1.8" fill="#2b2b2b" />
<rect x="836.3" y="176.0" width="19.600000000000023" height="1.8" fill="#2b2b2b" />
<rect x="832" y="184.1" width="27.799999999999955" height="1.8" fill="#2b2b2b" />
<rect x="884" y="176.0" width="28" height="1.8" fill="#2b2b2b" />
<rect x="888.3" y="184.1" width="19.5" height="1.8" fill="#2b2b2b" />
<rect x="884" y="192.0" width="28" height="1.8" fill="#2b2b2b" />
<rect x="938.05" y="159.8" width="1.5" height="36.39999999999998" fill="#d2d2d2" />
<rect x="780" y="228.0" width="28" height="1.8" fill="#2b2b2b" />
<rect x="780" y="236.0" width="20" height="1.8" fill="#2b2b2b" />
<rect x="780" y="244.0" width="28" height="1.8" fill="#2b2b2b" />
<rect x="780" y="251.9" width="20" height="1.8" fill="#2b2b2b" />
<rect x="832" y="228.0" width="28" height="1.8" fill="#2b2b2b" />
<rect x="836.3" y="236.0" width="19.600000000000023" height="1.8" fill="#2b2b2b" />
<rect x="832" y="244.0" width="28" height="1.8" fill="#2b2b2b" />
<rect x="836.3" y="251.9" width="19.600000000000023" height="1.8" fill="#2b2b2b" />
<rect x="884" y="228.0" width="28" height="1.8" fill="#2b2b2b" />
<rect x="892.2" y="236.0" width="19.799999999999955" height="1.8" fill="#2b2b2b" />
<rect x="884" y="244.0" width="28" height="1.8" fill="#2b2b2b" />
<rect x="892.2" y="251.9" width="19.799999999999955" height="1.8" fill="#2b2b2b" />
<rect x="938.05" y="224" width="1.5" height="35.69999999999999" fill="#d2d2d2" />
<text x="0" y="0" font-family="Liberation Sans" font-size="21" fill="#333" transform="translate(970,185.5) rotate(-45)" textLength="24" lengthAdjust="spacingAndGlyphs">ab</text>
<line x1="975.5" y1="190.5" x2="994.5" y2="171.5" stroke="#2b8ad6" stroke-width="1.8" stroke-linecap="butt"/>
<polyline points="986.5,171.2 994.8,171.2 994.8,179.5" fill="none" stroke="#2b8ad6" stroke-width="1.8"/>
<polyline points="1011.2,176.2 1015.9,181.4 1020.5999999999999,176.2" fill="none" stroke="#333333" stroke-width="2.4" stroke-linecap="round" stroke-linejoin="round"/>
<rect x="966" y="228.0" width="28" height="1.8" fill="#2b2b2b" />
<rect x="982.2" y="236.0" width="11.799999999999955" height="1.8" fill="#2b2b2b" />
<rect x="982.2" y="244.0" width="11.799999999999955" height="1.8" fill="#2b2b2b" />
<rect x="966" y="251.9" width="28" height="1.8" fill="#2b2b2b" />
<line x1="967.5" y1="240.9" x2="977.5" y2="240.9" stroke="#2b8ad6" stroke-width="1.8" stroke-linecap="butt"/>
<polyline points="971.5,236.5 967,240.9 971.5,245.3" fill="none" stroke="#2b8ad6" stroke-width="1.8"/>
<rect x="1017.9" y="228.0" width="28.000000000000114" height="1.8" fill="#2b2b2b" />
<rect x="1034.4" y="236.0" width="11.5" height="1.8" fill="#2b2b2b" />
<rect x="1034.4" y="244.0" width="11.5" height="1.8" fill="#2b2b2b" />
<rect x="1017.9" y="251.9" width="28.000000000000114" height="1.8" fill="#2b2b2b" />
<line x1="1018" y1="240.9" x2="1028.5" y2="240.9" stroke="#2b8ad6" stroke-width="1.8" stroke-linecap="butt"/>
<polyline points="1024.5,236.5 1029,240.9 1024.5,245.3" fill="none" stroke="#2b8ad6" stroke-width="1.8"/>
<rect x="1071.95" y="144" width="1.5" height="123.60000000000002" fill="#d2d2d2" />
<path d="M1096.2,154.1 L1271.5,154.1 Q1271.5,154.1 1271.5,154.1 L1271.5,195.9 Q1271.5,201.9 1265.5,201.9 L1096.2,201.9 Q1090.2,201.9 1090.2,195.9 L1090.2,160.1 Q1090.2,154.1 1096.2,154.1 Z" fill="#dedede"/>
<path d="M1265.5,154.1 Q1271.5,154.1 1271.5,160.1 L1271.5,195.9 Q1271.5,201.9 1265.5,201.9 L1248,201.9 L1248,154.1 Z" fill="#e0e0e0"/>
<path d="M1096.2,154.1 L1248,154.1 L1248,201.9 L1096.2,201.9 Q1090.2,201.9 1090.2,195.9 L1090.2,160.1 Q1090.2,154.1 1096.2,154.1 Z" fill="#c5c5c5"/>
<text x="1102.5" y="176.1" font-family="Liberation Sans" font-size="20" fill="#444" textLength="24" lengthAdjust="spacingAndGlyphs" >ab</text>
<text x="1102.5" y="190.9" font-family="Liberation Sans" font-size="20" fill="#444" textLength="9.5" lengthAdjust="spacingAndGlyphs" >c</text>
<path d="M1127.5,178 Q1131,183.5 1125,186.3 L1115.5,186.3" fill="none" stroke="#2b8ad6" stroke-width="1.9"/>
<polyline points="1119.5,182 1115.2,186.3 1119.5,190.6" fill="none" stroke="#2b8ad6" stroke-width="1.9"/>
<text x="1142" y="185.7" font-family="Liberation Sans" font-size="21.5" fill="#111" textLength="100" lengthAdjust="spacingAndGlyphs" stroke="#111" stroke-width="0.3">Wrap Text</text>
<polyline points="1255.2,175.89999999999998 1259.85,181.60000000000002 1264.5,175.89999999999998" fill="none" stroke="#333333" stroke-width="2.4" stroke-linecap="round" stroke-linejoin="round"/>
<rect x="1099" y="227" width="28" height="28" fill="#f7f7f7" stroke="#333" stroke-width="1.8"/>
<rect x="1099" y="233" width="28" height="16" fill="#f7f7f7" stroke="#1f7fd0" stroke-width="1.8"/>
<line x1="1113.3" y1="227" x2="1113.3" y2="233" stroke="#333" stroke-width="1.6" stroke-linecap="butt"/>
<line x1="1113.3" y1="249" x2="1113.3" y2="255" stroke="#333" stroke-width="1.6" stroke-linecap="butt"/>
<line x1="1104" y1="241" x2="1122" y2="241" stroke="#1f7fd0" stroke-width="1.8" stroke-linecap="butt"/>
<polyline points="1107.5,237.3 1103.6,241 1107.5,244.7" fill="none" stroke="#1f7fd0" stroke-width="1.8"/>
<polyline points="1118.5,237.3 1122.4,241 1118.5,244.7" fill="none" stroke="#1f7fd0" stroke-width="1.8"/>
<text x="1142" y="249.7" font-family="Liberation Sans" font-size="21.5" fill="#111" textLength="158" lengthAdjust="spacingAndGlyphs" stroke="#111" stroke-width="0.3">Merge &amp; Center</text>
<polyline points="1313.2,240.2 1318.0,245.8 1322.8,240.2" fill="none" stroke="#333333" stroke-width="2.4" stroke-linecap="round" stroke-linejoin="round"/>
<rect x="1349.95" y="144" width="1.5" height="124" fill="#d2d2d2" />
<rect x="1373.1" y="154.9" width="307.8" height="46" rx="6" fill="#ffffff" stroke="#c4c4c4" stroke-width="1"/>
<text x="1384.3" y="186.1" font-family="Liberation Sans" font-size="25.5" fill="#111" textLength="86" lengthAdjust="spacingAndGlyphs" stroke="#111" stroke-width="0.3">Custom</text>
<polyline points="1662.4,176.2 1667.2,181.9 1672.0,176.2" fill="none" stroke="#333333" stroke-width="2.4" stroke-linecap="round" stroke-linejoin="round"/>
<line x1="1395" y1="226" x2="1395" y2="257.5" stroke="#333" stroke-width="1.7" stroke-linecap="butt"/>
<path d="M1401.5,233.5 C1400,230.8 1397.8,229.6 1395,229.6 C1391.2,229.6 1388.7,232 1388.7,235.3 C1388.7,243.5 1401.6,240.8 1401.6,249 C1401.6,252.6 1398.8,254.9 1395,254.9 C1391.8,254.9 1389.3,253.5 1388,250.8" fill="none" stroke="#333" stroke-width="1.9"/>
<polyline points="1427.4,240.1 1432.15,245.60000000000002 1436.8999999999999,240.1" fill="none" stroke="#333333" stroke-width="2.4" stroke-linecap="round" stroke-linejoin="round"/>
<circle cx="1463" cy="234.3" r="4.6" fill="none" stroke="#333" stroke-width="1.9"/>
<circle cx="1480.7" cy="249.8" r="4.6" fill="none" stroke="#333" stroke-width="1.9"/>
<line x1="1484.5" y1="229" x2="1462" y2="255.5" stroke="#333" stroke-width="1.9" stroke-linecap="butt"/>
<path d="M1524.5,230 C1529,230 1532.6,233 1532.6,238.5 C1532.6,246 1527,252 1519.5,254.5 L1518.5,253 C1523,250.5 1525.5,247.5 1526,244.5 C1521,245 1518,242 1518,238 C1518,233.5 1521,230 1524.5,230 Z" fill="#3a3a3a"/>
<rect x="1564.25" y="224" width="1.5" height="35.80000000000001" fill="#d2d2d2" />
<text x="1610" y="239.4" font-family="Liberation Sans" font-size="18" fill="#333" textLength="10" lengthAdjust="spacingAndGlyphs" >0</text>
<text x="1595" y="255.7" font-family="Liberation Sans" font-size="18" fill="#333" textLength="25.5" lengthAdjust="spacingAndGlyphs" >.00</text>
<rect x="1606" y="237" width="2.6" height="2.6" fill="#333" />
<line x1="1591" y1="234.5" x2="1607.7" y2="234.5" stroke="#2b8ad6" stroke-width="1.8" stroke-linecap="butt"/>
<polyline points="1595,230.3 1590.6,234.5 1595,238.7" fill="none" stroke="#2b8ad6" stroke-width="1.8"/>
<text x="1647" y="239.4" font-family="Liberation Sans" font-size="18" fill="#333" textLength="25.5" lengthAdjust="spacingAndGlyphs" >.00</text>
<text x="1662" y="255.7" font-family="Liberation Sans" font-size="18" fill="#333" textLength="10" lengthAdjust="spacingAndGlyphs" >0</text>
<rect x="1658.5" y="253.2" width="2.6" height="2.6" fill="#333" />
<line x1="1642" y1="249.3" x2="1658.5" y2="249.3" stroke="#2b8ad6" stroke-width="1.8" stroke-linecap="butt"/>
<polyline points="1654.5,245 1658.9,249.3 1654.5,253.6" fill="none" stroke="#2b8ad6" stroke-width="1.8"/>
<rect x="1702.15" y="144.5" width="1.5" height="122.69999999999999" fill="#d2d2d2" />
<rect x="1747.2" y="161.3" width="53.5" height="41.099999999999994" fill="#f8f8f8" stroke="#444" stroke-width="1.6"/>
<line x1="1756.1" y1="161.3" x2="1756.1" y2="202.4" stroke="#444" stroke-width="1.6" stroke-linecap="butt"/>
<line x1="1791.1" y1="161.3" x2="1791.1" y2="202.4" stroke="#444" stroke-width="1.6" stroke-linecap="butt"/>
<line x1="1747.2" y1="175" x2="1800.7" y2="175" stroke="#444" stroke-width="1.6" stroke-linecap="butt"/>
<line x1="1747.2" y1="188.3" x2="1800.7" y2="188.3" stroke="#444" stroke-width="1.6" stroke-linecap="butt"/>
<rect x="1756.8" y="161.3" width="24" height="13.7" fill="#f9a3a8" stroke="#d42a2a" stroke-width="1.6"/>
<rect x="1756.8" y="175.7" width="16.4" height="12.5" fill="#85b8e8" stroke="#1f6fbf" stroke-width="1.6"/>
<rect x="1756.8" y="188.3" width="28" height="14.1" fill="#f9a3a8" stroke="#d42a2a" stroke-width="1.6"/>
<polyline points="1817.1000000000001,180.2 1821.85,185.70000000000002 1826.6,180.2" fill="none" stroke="#333333" stroke-width="2.4" stroke-linecap="round" stroke-linejoin="round"/>
<text x="1728.2" y="241.9" font-family="Liberation Sans" font-size="20.5" fill="#111" textLength="113" lengthAdjust="spacingAndGlyphs" stroke="#111" stroke-width="0.3">Conditional</text>
<text x="1730.8" y="265.7" font-family="Liberation Sans" font-size="20.5" fill="#111" textLength="108" lengthAdjust="spacingAndGlyphs" stroke="#111" stroke-width="0.3">Formatting</text>
<rect x="1861.3" y="161.3" width="53.90000000000009" height="41.099999999999994" fill="#f8f8f8" stroke="#444" stroke-width="1.6"/>
<line x1="1878.8" y1="161.3" x2="1878.8" y2="202.4" stroke="#444" stroke-width="1.6" stroke-linecap="butt"/>
<line x1="1897.1" y1="161.3" x2="1897.1" y2="202.4" stroke="#444" stroke-width="1.6" stroke-linecap="butt"/>
<line x1="1861.3" y1="175" x2="1915.2" y2="175" stroke="#444" stroke-width="1.6" stroke-linecap="butt"/>
<line x1="1861.3" y1="188.3" x2="1915.2" y2="188.3" stroke="#444" stroke-width="1.6" stroke-linecap="butt"/>
<rect x="1878.8" y="175" width="36.4" height="27.4" fill="#85b8e8" stroke="#1f6fbf" stroke-width="1.8"/>
<line x1="1897.1" y1="175" x2="1897.1" y2="202.4" stroke="#1f6fbf" stroke-width="1.6" stroke-linecap="butt"/>
<line x1="1878.8" y1="188.3" x2="1915.2" y2="188.3" stroke="#1f6fbf" stroke-width="1.6" stroke-linecap="butt"/>
<line x1="1918.5" y1="176" x2="1893" y2="201" stroke="#f3f3f3" stroke-width="9" stroke-linecap="round"/>
<line x1="1918.5" y1="176" x2="1893" y2="201" stroke="#333" stroke-width="5.6" stroke-linecap="round"/>
<line x1="1918.5" y1="176" x2="1893" y2="201" stroke="#fafafa" stroke-width="2.6" stroke-linecap="round"/>
<path d="M1874,211.5 C1879,211 1881,207 1884,203 C1887,199 1893,198 1897,202 C1900,206 1897,213 1888,213.5 C1883,214 1878,213 1874,211.5 Z" fill="#f3f3f3" stroke="#f3f3f3" stroke-width="4" stroke-linejoin="round"/>
<path d="M1874,211.5 C1879,211 1881,207 1884,203 C1887,199 1893,198 1897,202 C1900,206 1897,213 1888,213.5 C1883,214 1878,213 1874,211.5 Z" fill="#85b8e8" stroke="#1f6fbf" stroke-width="1.8" stroke-linejoin="round"/>
<polyline points="1931.4,180.2 1936.0,185.70000000000002 1940.6,180.2" fill="none" stroke="#333333" stroke-width="2.4" stroke-linecap="round" stroke-linejoin="round"/>
<text x="1863.8" y="241.9" font-family="Liberation Sans" font-size="20.5" fill="#111" textLength="70" lengthAdjust="spacingAndGlyphs" stroke="#111" stroke-width="0.3">Format</text>
<text x="1857.8" y="265.7" font-family="Liberation Sans" font-size="20.5" fill="#111" textLength="82" lengthAdjust="spacingAndGlyphs" stroke="#111" stroke-width="0.3">as Table</text>
<rect x="1961.5" y="161.3" width="53.40000000000009" height="41.099999999999994" fill="#f8f8f8" stroke="#444" stroke-width="1.6"/>
<line x1="1971" y1="161.3" x2="1971" y2="202.4" stroke="#444" stroke-width="1.6" stroke-linecap="butt"/>
<line x1="2005.3" y1="161.3" x2="2005.3" y2="202.4" stroke="#444" stroke-width="1.6" stroke-linecap="butt"/>
<line x1="1961.5" y1="170.5" x2="2014.9" y2="170.5" stroke="#444" stroke-width="1.6" stroke-linecap="butt"/>
<line x1="1961.5" y1="192.8" x2="2014.9" y2="192.8" stroke="#444" stroke-width="1.6" stroke-linecap="butt"/>
<rect x="1971" y="170.5" width="34.3" height="22.3" fill="#85b8e8" stroke="#1f6fbf" stroke-width="1.8"/>
<line x1="2018.2" y1="176" x2="1992.7" y2="201" stroke="#f3f3f3" stroke-width="9" stroke-linecap="round"/>
<line x1="2018.2" y1="176" x2="1992.7" y2="201" stroke="#333" stroke-width="5.6" stroke-linecap="round"/>
<line x1="2018.2" y1="176" x2="1992.7" y2="201" stroke="#fafafa" stroke-width="2.6" stroke-linecap="round"/>
<path d="M1973.7,211.5 C1978.7,211 1980.7,207 1983.7,203 C1986.7,199 1992.7,198 1996.7,202 C1999.7,206 1996.7,213 1987.7,213.5 C1982.7,214 1977.7,213 1973.7,211.5 Z" fill="#f3f3f3" stroke="#f3f3f3" stroke-width="4" stroke-linejoin="round"/>
<path d="M1973.7,211.5 C1978.7,211 1980.7,207 1983.7,203 C1986.7,199 1992.7,198 1996.7,202 C1999.7,206 1996.7,213 1987.7,213.5 C1982.7,214 1977.7,213 1973.7,211.5 Z" fill="#85b8e8" stroke="#1f6fbf" stroke-width="1.8" stroke-linejoin="round"/>
<polyline points="2031.0,180.2 2035.75,185.70000000000002 2040.5,180.2" fill="none" stroke="#333333" stroke-width="2.4" stroke-linecap="round" stroke-linejoin="round"/>
<text x="1979" y="241.9" font-family="Liberation Sans" font-size="20.5" fill="#111" textLength="38" lengthAdjust="spacingAndGlyphs" stroke="#111" stroke-width="0.3">Cell</text>
<text x="1968" y="265.7" font-family="Liberation Sans" font-size="20.5" fill="#111" textLength="61.5" lengthAdjust="spacingAndGlyphs" stroke="#111" stroke-width="0.3">Styles</text>
<rect x="2067.75" y="144.5" width="1.5" height="122.69999999999999" fill="#d2d2d2" />
<rect x="2097.3" y="153.4" width="29.59999999999991" height="25.19999999999999" fill="#f8f8f8" stroke="#444" stroke-width="1.6"/>
<line x1="2107.2" y1="153.4" x2="2107.2" y2="178.6" stroke="#444" stroke-width="1.6" stroke-linecap="butt"/>
<line x1="2117.6" y1="153.4" x2="2117.6" y2="178.6" stroke="#444" stroke-width="1.6" stroke-linecap="butt"/>
<line x1="2097.3" y1="161" x2="2126.9" y2="161" stroke="#444" stroke-width="1.6" stroke-linecap="butt"/>
<line x1="2097.3" y1="171" x2="2126.9" y2="171" stroke="#444" stroke-width="1.6" stroke-linecap="butt"/>
<rect x="2107.2" y="160.5" width="19.7" height="10.5" fill="#85b8e8" stroke="#1f6fbf" stroke-width="1.6"/>
<line x1="2117.6" y1="160.5" x2="2117.6" y2="171" stroke="#1f6fbf" stroke-width="1.6" stroke-linecap="butt"/>
<line x1="2098" y1="165.6" x2="2110" y2="165.6" stroke="#2b8ad6" stroke-width="2" stroke-linecap="butt"/>
<polyline points="2102,161.5 2097.8,165.6 2102,169.7" fill="none" stroke="#2b8ad6" stroke-width="1.8"/>
<text x="2140" y="173.9" font-family="Liberation Sans" font-size="21" fill="#111" textLength="57" lengthAdjust="spacingAndGlyphs" stroke="#111" stroke-width="0.3">Insert</text>
<polyline points="2213.2,164.2 2218.0,169.8 2222.8,164.2" fill="none" stroke="#333333" stroke-width="2.4" stroke-linecap="round" stroke-linejoin="round"/>
<rect x="2097.3" y="197.3" width="29.59999999999991" height="25.19999999999999" fill="#f8f8f8" stroke="#444" stroke-width="1.6"/>
<line x1="2107.2" y1="197.3" x2="2107.2" y2="222.5" stroke="#444" stroke-width="1.6" stroke-linecap="butt"/>
<line x1="2117.6" y1="197.3" x2="2117.6" y2="222.5" stroke="#444" stroke-width="1.6" stroke-linecap="butt"/>
<line x1="2097.3" y1="204.5" x2="2126.9" y2="204.5" stroke="#444" stroke-width="1.6" stroke-linecap="butt"/>
<line x1="2097.3" y1="216" x2="2126.9" y2="216" stroke="#444" stroke-width="1.6" stroke-linecap="butt"/>
<rect x="2111" y="203" width="16" height="14" fill="#f3f3f3"/>
<rect x="2102.8" y="206" width="10.5" height="8.6" fill="#85b8e8" stroke="#1f6fbf" stroke-width="1.6"/>
<line x1="2117.5" y1="205.5" x2="2126.5" y2="215" stroke="#e03a3a" stroke-width="1.8" stroke-linecap="butt"/>
<line x1="2126.5" y1="205.5" x2="2117.5" y2="215" stroke="#e03a3a" stroke-width="1.8" stroke-linecap="butt"/>
<text x="2140" y="217.7" font-family="Liberation Sans" font-size="21" fill="#111" textLength="64" lengthAdjust="spacingAndGlyphs" stroke="#111" stroke-width="0.3">Delete</text>
<polyline points="2219.2,208.2 2224.0,213.8 2228.8,208.2" fill="none" stroke="#333333" stroke-width="2.4" stroke-linecap="round" stroke-linejoin="round"/>
<rect x="2097.3" y="242.7" width="29.59999999999991" height="25.900000000000034" fill="#f8f8f8" stroke="#444" stroke-width="1.6"/>
<line x1="2107.2" y1="242.7" x2="2107.2" y2="268.6" stroke="#444" stroke-width="1.6" stroke-linecap="butt"/>
<line x1="2117.6" y1="242.7" x2="2117.6" y2="268.6" stroke="#444" stroke-width="1.6" stroke-linecap="butt"/>
<line x1="2097.3" y1="250" x2="2126.9" y2="250" stroke="#444" stroke-width="1.6" stroke-linecap="butt"/>
<line x1="2097.3" y1="262" x2="2126.9" y2="262" stroke="#444" stroke-width="1.6" stroke-linecap="butt"/>
<rect x="2098" y="236" width="28" height="6" fill="#f3f3f3"/>
<line x1="2103" y1="240.4" x2="2121.5" y2="240.4" stroke="#2b8ad6" stroke-width="1.6" stroke-linecap="butt"/>
<line x1="2103" y1="237.5" x2="2103" y2="243" stroke="#2b8ad6" stroke-width="1.6" stroke-linecap="butt"/>
<line x1="2121.5" y1="237.5" x2="2121.5" y2="243" stroke="#2b8ad6" stroke-width="1.6" stroke-linecap="butt"/>
<rect x="2105.8" y="251.6" width="13.3" height="9.6" fill="#85b8e8" stroke="#1f6fbf" stroke-width="1.6"/>
<text x="2140" y="261.7" font-family="Liberation Sans" font-size="21" fill="#111" textLength="70" lengthAdjust="spacingAndGlyphs" stroke="#111" stroke-width="0.3">Format</text>
<polyline points="2225.2,252.0 2229.95,257.8 2234.7000000000003,252.0" fill="none" stroke="#333333" stroke-width="2.4" stroke-linecap="round" stroke-linejoin="round"/>
<rect x="2261.95" y="144.5" width="1.5" height="122.69999999999999" fill="#d2d2d2" />
<path d="M2318,156 L2318,153.5 L2294.5,153.5 L2307,166 L2294.5,178.5 L2318,178.5 L2318,176" fill="none" stroke="#333" stroke-width="1.8"/>
<polyline points="2335.2,164.2 2340.0,169.8 2344.8,164.2" fill="none" stroke="#333333" stroke-width="2.4" stroke-linecap="round" stroke-linejoin="round"/>
<rect x="2291.4" y="197.4" width="29.1" height="25" fill="#f8f8f8" stroke="#333" stroke-width="1.8"/>
<line x1="2291.4" y1="201.3" x2="2320.5" y2="201.3" stroke="#333" stroke-width="1.6" stroke-linecap="butt"/>
<line x1="2305.5" y1="205" x2="2305.5" y2="219" stroke="#2b8ad6" stroke-width="1.8" stroke-linecap="butt"/>
<polyline points="2300.8,214.5 2305.5,219.2 2310.2,214.5" fill="none" stroke="#2b8ad6" stroke-width="1.8"/>
<polyline points="2335.2,208.2 2340.0,213.8 2344.8,208.2" fill="none" stroke="#333333" stroke-width="2.4" stroke-linecap="round" stroke-linejoin="round"/>
<path d="M2306,240 L2319.5,253.5 L2305.5,267.5 L2292,254 Z" fill="#f8f8f8" stroke="#9b3fb8" stroke-width="1.8" stroke-linejoin="miter"/>
<path d="M2299,247 L2312.5,260.5 L2305.5,267.5 L2292,254 Z" fill="#dba6e6" stroke="#9b3fb8" stroke-width="1.8"/>
<polyline points="2335.2,252.0 2340.0,257.8 2344.8,252.0" fill="none" stroke="#333333" stroke-width="2.4" stroke-linecap="round" stroke-linejoin="round"/>
<text x="2363.3" y="179.9" font-family="Liberation Sans" font-size="33" fill="#2b8ad6" textLength="20" lengthAdjust="spacingAndGlyphs" >A</text>
<path d="M2366,185.5 L2381,185.5 L2365.5,206.5 L2381.7,206.5" fill="none" stroke="#333" stroke-width="1.8"/>
<path d="M2389.3,169.2 L2419,169.2 L2419,173.5 L2407.8,185 L2407.8,198.6 L2400,198.6 L2400,185 L2389.3,173.5 Z" fill="#f8f8f8" stroke="#333" stroke-width="1.8" stroke-linejoin="miter"/>
<polyline points="2434.8999999999996,179.89999999999998 2439.85,185.4 2444.8,179.89999999999998" fill="none" stroke="#333333" stroke-width="2.4" stroke-linecap="round" stroke-linejoin="round"/>
<text x="2369.5" y="241.9" font-family="Liberation Sans" font-size="20.5" fill="#111" textLength="63" lengthAdjust="spacingAndGlyphs" stroke="#111" stroke-width="0.3">Sort &amp;</text>
<text x="2376.3" y="265.7" font-family="Liberation Sans" font-size="20.5" fill="#111" textLength="50" lengthAdjust="spacingAndGlyphs" stroke="#111" stroke-width="0.3">Filter</text>
<circle cx="2499.2" cy="174.7" r="20" fill="#f8f8f8" stroke="#333" stroke-width="1.9"/>
<line x1="2485" y1="189" x2="2463" y2="211" stroke="#333" stroke-width="1.9" stroke-linecap="round"/>
<polyline points="2535.1,179.89999999999998 2540.15,185.4 2545.2000000000003,179.89999999999998" fill="none" stroke="#333333" stroke-width="2.4" stroke-linecap="round" stroke-linejoin="round"/>
<text x="2470" y="241.5" font-family="Liberation Sans" font-size="20.5" fill="#111" textLength="63" lengthAdjust="spacingAndGlyphs" stroke="#111" stroke-width="0.3">Find &amp;</text>
<text x="2470" y="266" font-family="Liberation Sans" font-size="20.5" fill="#111" textLength="62.5" lengthAdjust="spacingAndGlyphs" stroke="#111" stroke-width="0.3">Select</text>
<rect x="2572.25" y="144" width="1.5" height="124" fill="#d2d2d2" />
<rect x="2607.3" y="151.3" width="61.4" height="61.5" fill="#f4f4f4"/>
<rect x="2608.3" y="152.3" width="59.4" height="7.6" fill="#e2e2e2" />
<line x1="2608" y1="160" x2="2668" y2="160" stroke="#adadad" stroke-width="2" stroke-linecap="butt"/>
<line x1="2608" y1="178.7" x2="2668" y2="178.7" stroke="#adadad" stroke-width="2" stroke-linecap="butt"/>
<line x1="2608" y1="194.6" x2="2668" y2="194.6" stroke="#adadad" stroke-width="2" stroke-linecap="butt"/>
<line x1="2627.3" y1="194.6" x2="2627.3" y2="212" stroke="#adadad" stroke-width="1.8" stroke-linecap="butt"/>
<line x1="2648" y1="194.6" x2="2648" y2="212" stroke="#adadad" stroke-width="1.8" stroke-linecap="butt"/>
<path d="M2664.5,212.8 L2607.3,212.8 L2607.3,151.3 L2668.7,151.3 L2668.7,208.5" fill="none" stroke="#adadad" stroke-width="2"/>
<circle cx="2635.5" cy="177" r="22" fill="#f4f4f4"/>
<line x1="2649" y1="192.5" x2="2668.5" y2="212.8" stroke="#f4f4f4" stroke-width="6"/>
<circle cx="2635.5" cy="177" r="19.2" fill="#f4f4f4" stroke="#adadad" stroke-width="2"/>
<line x1="2649.3" y1="192.8" x2="2668.8" y2="212.8" stroke="#adadad" stroke-width="2.2" stroke-linecap="butt"/>
<rect x="2625.3" y="174.3" width="6.6" height="11" fill="#e2e2e2" stroke="#adadad" stroke-width="1.6"/>
<rect x="2631.9" y="165.1" width="7.3" height="20.2" fill="#f8f8f8" stroke="#adadad" stroke-width="1.6"/>
<rect x="2640" y="168.8" width="6.6" height="16.5" fill="#c9e0f5" stroke="#a3bfdb" stroke-width="1.6"/>
<text x="2597.7" y="241.5" font-family="Liberation Sans" font-size="20.5" fill="#8c8c8c" textLength="77.5" lengthAdjust="spacingAndGlyphs" stroke="#8c8c8c" stroke-width="0.3">Analyze</text>
<text x="2614.2" y="265.3" font-family="Liberation Sans" font-size="20.5" fill="#8c8c8c" textLength="45" lengthAdjust="spacingAndGlyphs" stroke="#8c8c8c" stroke-width="0.3">Data</text>
<rect x="2702.25" y="144" width="1.5" height="124" fill="#d2d2d2" />
<path d="M2769.3,155.6 L2747.9,155.6 L2747.9,208 L2786,208 L2786,184.4" fill="none" stroke="#a9cde9" stroke-width="1.8"/>
<polygon points="2761.4,170.8 2780.2,189.4 2772.8,196.6 2754.2,177.6" fill="#f4f4f4" stroke="#a9cde9" stroke-width="1.8" stroke-linejoin="miter"/>
<line x1="2761" y1="177" x2="2774.2" y2="189.6" stroke="#a9cde9" stroke-width="2.6"/>
<polygon points="2776.7,152.6 2797.4,173 2789.6,180.4 2769.2,160.4" fill="#f4f4f4" stroke="#a9cde9" stroke-width="1.8" stroke-linejoin="miter"/>
<polygon points="2769.8,161.8 2773.2,158.6 2790,175.6 2786.4,179.6" fill="#b4d5ee"/>
<polygon points="2789.2,151.4 2799.2,160.4 2791,164.2 2785.2,158.4" fill="#f4f4f4" stroke="#a9cde9" stroke-width="1.8" stroke-linejoin="miter"/>
<polyline points="2811.2999999999997,179.79999999999998 2816.1,185.5 2820.9,179.79999999999998" fill="none" stroke="#b5b5b5" stroke-width="2.2" stroke-linecap="round" stroke-linejoin="round"/>
<text x="2727.2" y="241.5" font-family="Liberation Sans" font-size="20.5" fill="#8c8c8c" textLength="103.5" lengthAdjust="spacingAndGlyphs" stroke="#8c8c8c" stroke-width="0.3">Sensitivity</text>
<text x="20.5" y="319.8" font-family="Liberation Sans" font-size="24" fill="#111" textLength="37" lengthAdjust="spacingAndGlyphs" stroke="#111" stroke-width="0.3">L18</text>
<polygon points="146.5,305.7 159.8,305.7 153.15,295.4" fill="#666"/>
<polygon points="146.5,318 159.8,318 153.15,328.6" fill="#666"/>
<line x1="202" y1="303" x2="221" y2="322" stroke="#c9c9c9" stroke-width="3.2" stroke-linecap="round"/>
<line x1="221" y1="303" x2="202" y2="322" stroke="#c9c9c9" stroke-width="3.2" stroke-linecap="round"/>
<polyline points="257.5,313 265.5,321 283,303.5" fill="none" stroke="#c9c9c9" stroke-width="3.2" stroke-linecap="round" stroke-linejoin="round"/>
<text x="317.5" y="322" font-family="Liberation Serif" font-size="30" fill="#333" font-style="italic" textLength="27" lengthAdjust="spacingAndGlyphs" >fx</text>
<rect x="360.25" y="298" width="1.5" height="29" fill="#d8d8d8" />
<polygon points="2858.5,307 2872.4,307 2865.45,317.7" fill="#666"/>
<rect x="2271.5" y="1764" width="26.5" height="25.5" fill="#ffffff"/>
<g stroke="#a9a9a9" stroke-width="2"><line x1="2280.3" y1="1766" x2="2280.3" y2="1787.5"/><line x1="2289.2" y1="1766" x2="2289.2" y2="1787.5"/><line x1="2273.5" y1="1772.5" x2="2296" y2="1772.5"/><line x1="2273.5" y1="1781" x2="2296" y2="1781"/></g>
<g fill="none" stroke="#666" stroke-width="1.8"><rect x="2344" y="1765" width="26" height="24"/><rect x="2350" y="1770" width="14" height="14"/></g>
<line x1="2352.5" y1="1773" x2="2361.5" y2="1773" stroke="#666" stroke-width="1.4" stroke-linecap="butt"/>
<line x1="2352.5" y1="1777" x2="2361.5" y2="1777" stroke="#666" stroke-width="1.4" stroke-linecap="butt"/>
<line x1="2352.5" y1="1781" x2="2361.5" y2="1781" stroke="#666" stroke-width="1.4" stroke-linecap="butt"/>
<g fill="none" stroke="#666" stroke-width="1.8"><rect x="2415" y="1765" width="26" height="24"/><polyline points="2415,1777 2436,1777 2436,1765"/><line x1="2422.5" y1="1765" x2="2422.5" y2="1777"/></g>
<rect x="2480" y="1775.5" width="15" height="3.6" fill="#555" />
<rect x="2513" y="1773.5" width="195" height="7.5" rx="3.75" fill="#a3a3a3"/>
<circle cx="2614.4" cy="1777" r="10.5" fill="#fdfdfd" stroke="#c4c4c4" stroke-width="1"/>
<rect x="2723.5" y="1775.5" width="16" height="3.6" fill="#555" />
<rect x="2729.7" y="1769.3" width="3.6" height="16" fill="#555" />
<text x="2774" y="1786" font-family="Liberation Sans" font-size="23.5" fill="#555" textLength="57" lengthAdjust="spacingAndGlyphs" >119%</text>
</svg></body></html>
